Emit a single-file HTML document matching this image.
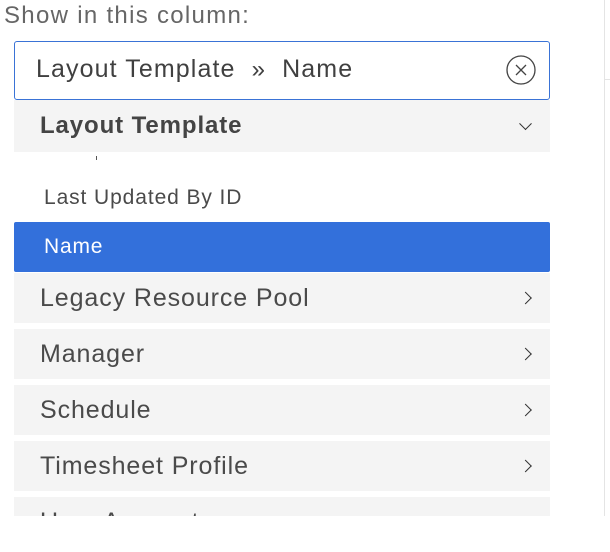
<!DOCTYPE html>
<html><head><style>
*{margin:0;padding:0;box-sizing:border-box}
body{width:610px;height:552px;background:#fff;font-family:"Liberation Sans",sans-serif;color:#444;position:relative;overflow:hidden}
.a{position:absolute;white-space:nowrap}
.row{position:absolute;left:14px;width:536px;background:#f4f4f4;font-size:25px;letter-spacing:0.9px;color:#4a4a4a;padding-left:26px;white-space:nowrap}
.chev{position:absolute;right:20px;top:50%;width:9px;height:9px;border-right:1.6px solid #333;border-top:1.6px solid #333;transform:translateY(-50%) rotate(45deg)}
</style></head><body>
<div class="a" style="left:604px;top:0;width:1px;height:516px;background:#e4e4e4"></div>
<div class="a" style="left:604px;top:79px;width:6px;height:1px;background:#e4e4e4"></div>
<div class="a" style="left:4px;top:2px;font-size:24px;letter-spacing:1.3px;color:#666">Show in this column:</div>
<div class="a" style="left:14px;top:41px;width:536px;height:59px;border:1.5px solid #3a73d6;border-radius:3px"></div>
<div class="a" style="left:36px;top:55px;font-size:25px;letter-spacing:1.1px;color:#404040">Layout Template&nbsp;&nbsp;<span style="font-size:24px">»</span>&nbsp;&nbsp;Name</div>
<svg class="a" style="left:505px;top:54px" width="32" height="32" viewBox="0 0 32 32"><circle cx="16" cy="16" r="14" fill="none" stroke="#444" stroke-width="1.3"/><path d="M11 11L21 21M21 11L11 21" stroke="#444" stroke-width="1.3"/></svg>
<div class="row" style="top:100px;height:52px;line-height:52px;font-weight:bold;font-size:24px;letter-spacing:0.9px;color:#444">Layout Template<span class="chev" style="transform:translateY(-75%) rotate(135deg)"></span></div>
<div class="a" style="left:96px;top:156px;width:1px;height:4px;background:#555"></div>
<div class="a" style="left:44px;top:186px;font-size:21px;letter-spacing:0.9px;color:#4a4a4a">Last Updated By ID</div>
<div class="a" style="left:14px;top:222px;width:536px;height:50px;background:#3370db;border-radius:2px;color:#fff;font-size:21px;letter-spacing:0.8px;line-height:50px;padding-left:30px">Name</div>
<div class="row" style="top:273px;height:50px;line-height:50px">Legacy Resource Pool<span class="chev"></span></div>
<div class="row" style="top:329px;height:50px;line-height:50px">Manager<span class="chev"></span></div>
<div class="row" style="top:385px;height:50px;line-height:50px">Schedule<span class="chev"></span></div>
<div class="row" style="top:441px;height:50px;line-height:50px">Timesheet Profile<span class="chev"></span></div>
<div class="row" style="top:497px;height:19px;overflow:hidden;line-height:50px">User Accounts</div>
</body></html>
